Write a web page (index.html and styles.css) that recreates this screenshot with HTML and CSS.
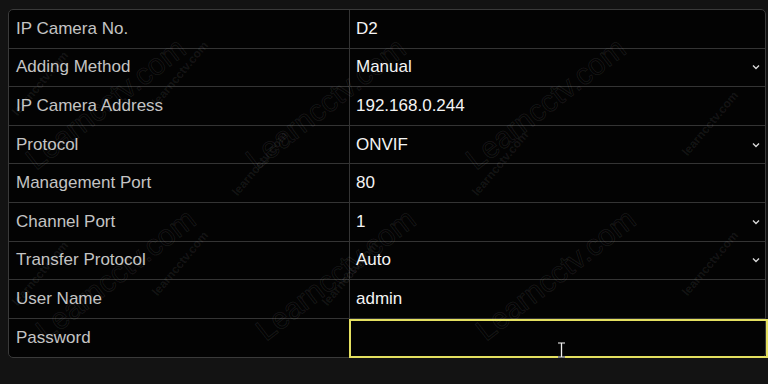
FILE: index.html
```html
<!DOCTYPE html>
<html>
<head>
<meta charset="utf-8">
<link rel="stylesheet" href="styles.css">
</head>
<body>
<div class="page">
  <div class="panel">
    <div class="row"><div class="label">IP Camera No.</div><div class="value">D2</div></div>
    <div class="row"><div class="label">Adding Method</div><div class="value">Manual<svg class="chev" width="8" height="6" viewBox="0 0 8 6"><polyline points="1,1.5 4,4.5 7,1.5" fill="none" stroke="#d8d8d8" stroke-width="1.4"/></svg></div></div>
    <div class="row"><div class="label">IP Camera Address</div><div class="value">192.168.0.244</div></div>
    <div class="row"><div class="label">Protocol</div><div class="value">ONVIF<svg class="chev" width="8" height="6" viewBox="0 0 8 6"><polyline points="1,1.5 4,4.5 7,1.5" fill="none" stroke="#d8d8d8" stroke-width="1.4"/></svg></div></div>
    <div class="row"><div class="label">Management Port</div><div class="value">80</div></div>
    <div class="row"><div class="label">Channel Port</div><div class="value">1<svg class="chev" width="8" height="6" viewBox="0 0 8 6"><polyline points="1,1.5 4,4.5 7,1.5" fill="none" stroke="#d8d8d8" stroke-width="1.4"/></svg></div></div>
    <div class="row"><div class="label">Transfer Protocol</div><div class="value">Auto<svg class="chev" width="8" height="6" viewBox="0 0 8 6"><polyline points="1,1.5 4,4.5 7,1.5" fill="none" stroke="#d8d8d8" stroke-width="1.4"/></svg></div></div>
    <div class="row"><div class="label">User Name</div><div class="value">admin</div></div>
    <div class="row last"><div class="label">Password</div><div class="value focus"><svg class="ibeam" width="9" height="16" viewBox="0 0 9 16"><path d="M1 1 H8 M4.5 1 V15 M1 15 H8" fill="none" stroke="#111" stroke-width="3"/><path d="M1 1 H8 M4.5 1 V15 M1 15 H8" fill="none" stroke="#f0f0f0" stroke-width="1.2"/></svg></div></div>

    <span class="wm big w1">Learncctv.com</span>
    <span class="wm big w2">Learncctv.com</span>
    <span class="wm big w3">Learncctv.com</span>
    <span class="wm big w4">Learncctv.com</span>
    <span class="wm big w5">Learncctv.com</span>
    <span class="wm big w6">Learncctv.com</span>
    <span class="wm small s1">learncctv.com</span>
    <span class="wm small s2">learncctv.com</span>
    <span class="wm small s3">learncctv.com</span>
    <span class="wm small s4">learncctv.com</span>
    <span class="wm small s5">learncctv.com</span>
    <span class="wm small s6">learncctv.com</span>
    <span class="wm small s7">learncctv.com</span>
    <span class="wm small s8">learncctv.com</span>
    <span class="wm small s9">learncctv.com</span>
  </div>
</div>
</body>
</html>
```

FILE: styles.css
```css
html, body {
  margin: 0;
  padding: 0;
  background: #131313;
}
.page {
  width: 768px;
  height: 384px;
  padding: 9px 4px 0 8px;
  box-sizing: border-box;
  font-family: "Liberation Sans", Arial, sans-serif;
  overflow: hidden;
}
.panel {
  position: relative;
  width: 756px;
  border: 1px solid #3a3a3a;
  border-radius: 5px;
  background: #030303;
  display: grid;
  grid-template-rows: repeat(9, 38.6px);
}
.row {
  display: grid;
  grid-template-columns: 341px 1fr;
  border-bottom: 1px solid #343434;
  box-sizing: border-box;
}
.row.last {
  border-bottom: none;
}
.label {
  display: flex;
  align-items: center;
  padding-left: 7px;
  font-size: 17px;
  color: #c4c4c4;
  border-right: 1px solid #343434;
}
.value {
  display: flex;
  align-items: center;
  padding-left: 6px;
  padding-right: 5px;
  font-size: 17px;
  color: #f4f4f4;
  position: relative;
}
.chev {
  margin-left: auto;
}
.focus {
  outline: 2px solid #e4e060;
  outline-offset: -1px;
  margin-right: -2px;
  margin-top: 1px;
}
.ibeam {
  position: absolute;
  left: 207px;
  top: 22px;
}
.wm {
  position: absolute;
  white-space: nowrap;
  pointer-events: none;
  transform-origin: left bottom;
  z-index: 2;
  line-height: 1;
}
.big {
  font-size: 30px;
  height: 30px;
  color: transparent;
  -webkit-text-stroke: 1px rgba(255,255,255,0.08);
  transform: rotate(-38deg);
}
.small {
  font-size: 12px;
  height: 12px;
  font-weight: bold;
  color: rgba(255,255,255,0.08);
  transform: rotate(-50deg);
}
.w1 { left: 30px; top: 135px; }
.w2 { left: 250px; top: 135px; }
.w3 { left: 470px; top: 135px; }
.w4 { left: 40px; top: 306px; }
.w5 { left: 260px; top: 306px; }
.w6 { left: 480px; top: 306px; }
.s1 { left: 10px; top: 96px; }
.s2 { left: 150px; top: 86px; }
.s3 { left: 230px; top: 176px; }
.s4 { left: 470px; top: 176px; }
.s5 { left: 10px; top: 286px; }
.s6 { left: 150px; top: 276px; }
.s7 { left: 320px; top: 286px; }
.s8 { left: 680px; top: 136px; }
.s9 { left: 680px; top: 276px; }
```
